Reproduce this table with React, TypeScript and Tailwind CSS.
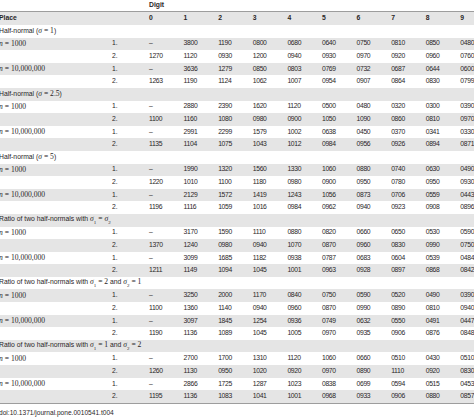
import React from "react";

type Row = {
  label?: React.ReactNode;
  place?: string;
  vals?: string[];
  section?: React.ReactNode;
};

const Sig = ({ sub }: { sub?: string }) => (
  <span className="font-['Liberation_Serif',serif] italic text-[7.6px]">
    σ{sub ? <span className="not-italic text-[5px] align-sub">{sub}</span> : null}
  </span>
);

const Ser = ({ children }: { children: React.ReactNode }) => (
  <span className="font-['Liberation_Serif',serif] text-[7.6px]">{children}</span>
);

const N = ({ v }: { v: string }) => (
  <span className="font-['Liberation_Serif',serif] text-[7.6px]">
    <i>n</i> = {v}
  </span>
);

const sections: { title: React.ReactNode; data: string[][] }[] = [
  {
    title: (
      <>
        Half-normal (<Sig />{" "}<Ser>= 1</Ser>)
      </>
    ),
    data: [
      ["–", "3800", "1190", "0800", "0680", "0640", "0750", "0810", "0850", "0480"],
      ["1270", "1120", "0930", "1200", "0940", "0930", "0970", "0920", "0960", "0760"],
      ["–", "3636", "1279", "0850", "0803", "0769", "0732", "0687", "0644", "0600"],
      ["1263", "1190", "1124", "1062", "1007", "0954", "0907", "0864", "0830", "0799"],
    ],
  },
  {
    title: (
      <>
        Half-normal (<Sig />{" "}<Ser>= 2.5</Ser>)
      </>
    ),
    data: [
      ["–", "2880", "2390", "1620", "1120", "0500", "0480", "0320", "0300", "0390"],
      ["1100", "1160", "1080", "0980", "0900", "1050", "1090", "0860", "0810", "0970"],
      ["–", "2991", "2299", "1579", "1002", "0638", "0450", "0370", "0341", "0330"],
      ["1135", "1104", "1075", "1043", "1012", "0984", "0956", "0926", "0894", "0871"],
    ],
  },
  {
    title: (
      <>
        Half-normal (<Sig />{" "}<Ser>= 5</Ser>)
      </>
    ),
    data: [
      ["–", "1990", "1320", "1560", "1330", "1060", "0880", "0740", "0630", "0490"],
      ["1220", "1010", "1100", "1180", "0980", "0900", "0950", "0780", "0950", "0930"],
      ["–", "2129", "1572", "1419", "1243", "1056", "0873", "0706", "0559", "0443"],
      ["1196", "1116", "1059", "1016", "0984", "0962", "0940", "0923", "0908", "0896"],
    ],
  },
  {
    title: (
      <>
        Ratio of two half-normals with{" "}<Sig sub="1" />{" "}<Ser>=</Ser>{" "}<Sig sub="2" />
      </>
    ),
    data: [
      ["–", "3170", "1590", "1110", "0880", "0820", "0660", "0650", "0530", "0590"],
      ["1370", "1240", "0980", "0940", "1070", "0870", "0960", "0830", "0990", "0750"],
      ["–", "3099", "1685", "1182", "0938", "0787", "0683", "0604", "0539", "0484"],
      ["1211", "1149", "1094", "1045", "1001", "0963", "0928", "0897", "0868", "0842"],
    ],
  },
  {
    title: (
      <>
        Ratio of two half-normals with{" "}<Sig sub="1" />{" "}<Ser>= 2</Ser> and{" "}<Sig sub="2" />{" "}<Ser>= 1</Ser>
      </>
    ),
    data: [
      ["–", "3250", "2000", "1170", "0840", "0750", "0590", "0520", "0490", "0390"],
      ["1100", "1360", "1140", "0940", "0960", "0870", "0990", "0890", "0810", "0940"],
      ["–", "3097", "1845", "1254", "0936", "0749", "0632", "0550", "0491", "0447"],
      ["1190", "1136", "1089", "1045", "1005", "0970", "0935", "0906", "0876", "0848"],
    ],
  },
  {
    title: (
      <>
        Ratio of two half-normals with{" "}<Sig sub="1" />{" "}<Ser>= 1</Ser> and{" "}<Sig sub="2" />{" "}<Ser>= 2</Ser>
      </>
    ),
    data: [
      ["–", "2700", "1700", "1310", "1120", "1060", "0660", "0510", "0430", "0510"],
      ["1260", "1130", "0950", "1020", "0920", "0970", "0890", "1110", "0920", "0830"],
      ["–", "2866", "1725", "1287", "1023", "0838", "0699", "0594", "0515", "0453"],
      ["1195", "1136", "1083", "1041", "1001", "0968", "0933", "0906", "0880", "0857"],
    ],
  },
];

const rows: Row[] = [];
sections.forEach((s) => {
  rows.push({ section: s.title });
  s.data.forEach((d, i) => {
    rows.push({
      label: i === 0 ? <N v="1000" /> : i === 2 ? <N v="10,000,000" /> : undefined,
      place: i % 2 === 0 ? "1." : "2.",
      vals: d,
    });
  });
});

export default function App() {
  return (
    <div className="w-[474px] h-[418px] overflow-hidden bg-white text-[#2a2627] font-['Liberation_Sans',Arial,sans-serif] text-[6.8px] leading-none">
      <div className="-ml-[1px] w-[520px]">
        {/* Digit header */}
        <div className="flex h-[11px] items-center">
          <div className="w-[150px] shrink-0" />
          <div className="font-bold">Digit</div>
        </div>
        <div className="h-px bg-[#9d9d9d]" />
        {/* Place header */}
        <div className="flex h-[13px] items-center bg-[#e5e5e5] font-bold">
          <div className="w-[150px] shrink-0">Place</div>
          {["0", "1", "2", "3", "4", "5", "6", "7", "8", "9"].map((d) => (
            <div key={d} className="w-[34.6px] shrink-0">
              {d}
            </div>
          ))}
        </div>
        {rows.map((r, idx) => {
          const grey = idx % 2 === 1;
          const cls = grey
            ? "flex h-[12.6px] items-center bg-[#e5e5e5] whitespace-nowrap"
            : "flex h-[12.6px] items-center whitespace-nowrap";
          if (r.section) {
            return (
              <div key={idx} className={cls}>
                <span>{r.section}</span>
              </div>
            );
          }
          return (
            <div key={idx} className={cls}>
              <div className="w-[113px] shrink-0">{r.label}</div>
              <div className="w-[37px] shrink-0">{r.place}</div>
              {r.vals!.map((v, i) => (
                <div key={i} className="w-[34.6px] shrink-0 tracking-[-0.35px]">
                  {v}
                </div>
              ))}
            </div>
          );
        })}
        <div className="h-px bg-[#9d9d9d]" />
        <div className="mt-[6px] text-[6.6px] whitespace-nowrap">
          doi:10.1371/journal.pone.0010541.t004
        </div>
      </div>
    </div>
  );
}
